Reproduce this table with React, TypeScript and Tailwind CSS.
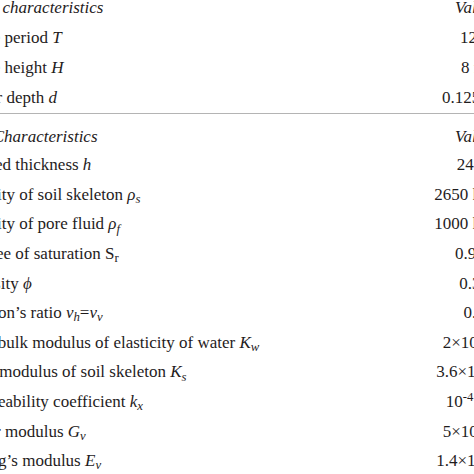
import React from "react";

type Row = { label: React.ReactNode; value: React.ReactNode };

const wave: Row[] = [
  { label: <>Wave period <i>T</i></>, value: <>12 s</> },
  { label: <>Wave height <i>H</i></>, value: <>8 m</> },
  { label: <>Water depth <i>d</i></>, value: <>0.125 km</> },
];

const soil: Row[] = [
  { label: <>Seabed thickness <i>h</i></>, value: <>24 m</> },
  { label: <>Density of soil skeleton <i>ρ</i><sub><i>s</i></sub></>, value: <>2650 kg/m<sup>3</sup></> },
  { label: <>Density of pore fluid <i>ρ</i><sub><i>f</i></sub></>, value: <>1000 kg/m<sup>3</sup></> },
  { label: <>Degree of saturation S<sub>r</sub></>, value: <>0.975</> },
  { label: <>Porosity <i>ϕ</i></>, value: <>0.35</> },
  { label: <>Poisson’s ratio <i>ν</i><sub><i>h</i></sub>=<i>ν</i><sub><i>v</i></sub></>, value: <>0.4</> },
  { label: <>True bulk modulus of elasticity of water <i>K</i><sub><i>w</i></sub></>, value: <>2×10<sup>9</sup> Pa</> },
  { label: <>Bulk modulus of soil skeleton <i>K</i><sub><i>s</i></sub></>, value: <>3.6×10<sup>7</sup> Pa</> },
  { label: <>Permeability coefficient <i>k</i><sub><i>x</i></sub></>, value: <>10<sup>-4</sup> m/s</> },
  { label: <>Shear modulus <i>G</i><sub><i>v</i></sub></>, value: <>5×10<sup>6</sup> Pa</> },
  { label: <>Young’s modulus <i>E</i><sub><i>v</i></sub></>, value: <>1.4×10<sup>7</sup> Pa</> },
];

function Line({ row, h }: { row: Row; h: string }) {
  return (
    <div className={`flex items-center ${h}`}>
      <div className="w-[452px] shrink-0 whitespace-nowrap">{row.label}</div>
      <div className="w-[120px] shrink-0 whitespace-nowrap text-center">{row.value}</div>
    </div>
  );
}

export default function App() {
  return (
    <div
      className="w-[474px] h-[474px] overflow-hidden bg-white text-[17px] leading-none text-[#1f1c1d]"
      style={{ fontFamily: '"Liberation Serif", "Times New Roman", serif' }}
    >
      <div className="ml-[-38px] w-[572px]">
        <div className="mt-[-8px]">
          <div className="flex items-center h-[30px] italic">
            <div className="w-[452px] shrink-0 whitespace-nowrap">Wave characteristics</div>
            <div className="w-[120px] shrink-0 text-center">Value</div>
          </div>
          {wave.map((r, i) => (
            <Line key={i} row={r} h="h-[30px]" />
          ))}
        </div>
        <div className="mt-[1px] h-px bg-[#b4b4b4]" />
        <div className="mt-[9px]">
          <div className="flex items-center h-[27px] italic">
            <div className="w-[452px] shrink-0 whitespace-nowrap">Soil Characteristics</div>
            <div className="w-[120px] shrink-0 text-center">Value</div>
          </div>
          {soil.map((r, i) => (
            <Line key={i} row={r} h="h-[29.6px]" />
          ))}
        </div>
      </div>
    </div>
  );
}
